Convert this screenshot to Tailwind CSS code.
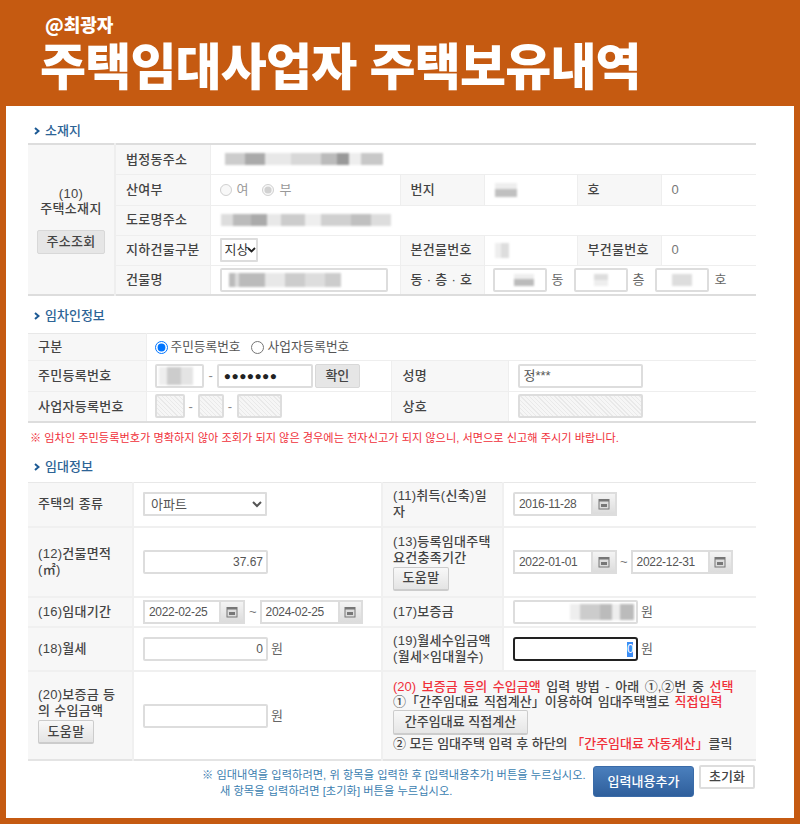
<!DOCTYPE html>
<html lang="ko">
<head>
<meta charset="utf-8">
<script src="https://cdn.jsdelivr.net/npm/@tailwindcss/browser@4"></script>
</head>
<body class="m-0 bg-[#c55a11] font-['Liberation_Sans','Noto_Sans_CJK_KR',sans-serif] text-[13px] text-[#555] overflow-hidden">
<div class="w-[800px] h-[824px] flex flex-col">
  <header class="h-[106px] shrink-0 text-white pl-[40px] font-['Noto_Sans_CJK_KR',sans-serif]">
    <div class="pl-[5px] pt-[14px] h-[34px] text-[18px] leading-[20px] font-black">@최광자</div>
    <h1 class="m-0 text-[50px] leading-[58px] font-black tracking-[-0.8px] whitespace-nowrap">주택임대사업자 주택보유내역</h1>
  </header>
  <main class="mx-[6px] w-[788px] h-[712px] bg-white pl-[22px] pr-[38px] flex flex-col">
    <h2 class="h-[37px] pt-[13px] pl-[6px] m-0 flex items-center gap-[5px] text-[13px] leading-[18px] font-medium text-[#2d6496]">
      <svg class="w-[6px] h-[8px]" viewBox="0 0 6 8"><path d="M1 1l3.5 3L1 7" fill="none" stroke="#1d5a94" stroke-width="2"/></svg>소재지
    </h2>
    <table class="w-[728px] table-fixed border-collapse border-t-2 border-b-2 border-[#ddd]">
      <colgroup><col class="w-[87px]"><col class="w-[95px]"><col class="w-[190px]"><col class="w-[84px]"><col class="w-[93px]"><col class="w-[84px]"><col></colgroup>
      <tbody>
        <tr class="h-[30px]">
          <th rowspan="5" class="bg-[#f7f7f7] border-r-2 border-[#eee] text-[#444] font-medium text-center leading-[15px] align-middle tracking-[0.3px]">
            <div>(10)</div><div>주택소재지</div>
            <button class="mt-[14px] w-[68px] h-[24px] bg-[#e6e6e6] border border-[#d8d8d8] rounded-[2px] text-[#444]">주소조회</button>
          </th>
          <th class="bg-[#f7f7f7] border-b border-r border-[#eee] px-[10px] text-left text-[#444] font-medium tracking-[0.3px] whitespace-nowrap">법정동주소</th>
          <td colspan="5" class="border-b border-[#eee] px-[10px]">
            <div class="w-[162px] h-[12px] blur-[1.2px] bg-[linear-gradient(90deg,#fff_0_4px,#ccc_4px_24px,#aaa_24px_44px,#e8e8e8_44px_70px,#d8d8d8_70px_100px,#bbb_100px_116px,#999_116px_128px,#eee_128px_140px,#c8c8c8_140px_162px)]"></div>
          </td>
        </tr>
        <tr class="h-[31px]">
          <th class="bg-[#f7f7f7] border-b border-r border-[#eee] px-[10px] text-left text-[#444] font-medium tracking-[0.3px] whitespace-nowrap">산여부</th>
          <td class="border-b border-r border-[#eee] px-[9px] text-[#999]">
            <div class="flex items-center gap-[5px]"><input type="radio" disabled class="m-0 w-[12px] h-[12px]"><span>여</span><input type="radio" checked disabled class="m-0 ml-[9px] w-[12px] h-[12px]"><span>부</span></div>
          </td>
          <th class="bg-[#f7f7f7] border-b border-r border-[#eee] px-[10px] text-left text-[#444] font-medium tracking-[0.3px] whitespace-nowrap">번지</th>
          <td class="border-b border-r border-[#eee] px-[10px]">
            <div class="w-[22px] h-[14px] blur-[1.2px] bg-[linear-gradient(180deg,#eee_0_6px,#c0c0c0_6px_14px)]"></div>
          </td>
          <th class="bg-[#f7f7f7] border-b border-r border-[#eee] px-[10px] text-left text-[#444] font-medium tracking-[0.3px] whitespace-nowrap">호</th>
          <td class="border-b border-[#eee] px-[10px] text-[#777]">0</td>
        </tr>
        <tr class="h-[30px]">
          <th class="bg-[#f7f7f7] border-b border-r border-[#eee] px-[10px] text-left text-[#444] font-medium tracking-[0.3px] whitespace-nowrap">도로명주소</th>
          <td colspan="5" class="border-b border-[#eee] px-[10px]">
            <div class="w-[170px] h-[12px] blur-[1.2px] bg-[linear-gradient(90deg,#ddd_0_12px,#bbb_12px_30px,#aaa_30px_46px,#e8e8e8_46px_60px,#ccc_60px_84px,#eee_84px_100px,#d0d0d0_100px_130px,#c0c0c0_130px_150px,#ddd_150px_170px)]"></div>
          </td>
        </tr>
        <tr class="h-[30px]">
          <th class="bg-[#f7f7f7] border-b border-r border-[#eee] px-[10px] text-left text-[#444] font-medium tracking-[0.3px] whitespace-nowrap">지하건물구분</th>
          <td class="border-b border-r border-[#eee] px-[9px]">
            <div class="relative w-[38px] h-[24px]">
              <select class="block appearance-none w-[38px] h-[24px] border-2 border-[#ddd] rounded-[1px] bg-white text-[#333] text-[13px] pl-[3px]"><option>지상</option></select>
              <svg class="absolute right-[2px] top-[9px] w-[9px] h-[6px] pointer-events-none" viewBox="0 0 9 6"><path d="M1 1l3.5 3.5L8 1" fill="none" stroke="#222" stroke-width="1.8"/></svg>
            </div>
          </td>
          <th class="bg-[#f7f7f7] border-b border-r border-[#eee] px-[10px] text-left text-[#444] font-medium tracking-[0.3px] whitespace-nowrap">본건물번호</th>
          <td class="border-b border-r border-[#eee] px-[10px]">
            <div class="w-[14px] h-[15px] blur-[1.2px] bg-[linear-gradient(90deg,#eee_0_6px,#ddd_6px_14px)]"></div>
          </td>
          <th class="bg-[#f7f7f7] border-b border-r border-[#eee] px-[10px] text-left text-[#444] font-medium tracking-[0.3px] whitespace-nowrap">부건물번호</th>
          <td class="border-b border-[#eee] px-[10px] text-[#777]">0</td>
        </tr>
        <tr class="h-[30px]">
          <th class="bg-[#f7f7f7] border-r border-[#eee] px-[10px] text-left text-[#444] font-medium tracking-[0.3px] whitespace-nowrap">건물명</th>
          <td class="border-r border-[#eee] px-[9px]">
            <div class="w-[168px] h-[24px] border-2 border-[#ddd] rounded-[2px] flex items-center pl-[7px]">
              <div class="w-[112px] h-[14px] blur-[1.2px] bg-[linear-gradient(90deg,#bbb_0_6px,#ddd_6px_10px,#bbb_10px_36px,#e8e8e8_36px_56px,#ccc_56px_76px,#ddd_76px_96px,#ccc_96px_112px)]"></div>
            </div>
          </td>
          <th class="bg-[#f7f7f7] border-r border-[#eee] px-[10px] text-left text-[#444] font-medium tracking-[0.3px] whitespace-nowrap">동 · 층 · 호</th>
          <td colspan="3" class="pl-[8px]">
            <div class="flex items-center text-[#666]">
              <div class="w-[54px] h-[24px] border-2 border-[#ddd] rounded-[2px] flex items-center justify-center pl-[8px]"><div class="w-[20px] h-[12px] blur-[1px] bg-[linear-gradient(180deg,#eee_0_5px,#bbb_5px_12px)]"></div></div>
              <span class="ml-[5px]">동</span>
              <div class="ml-[11px] w-[54px] h-[24px] border-2 border-[#ddd] rounded-[2px] flex items-center justify-center"><div class="w-[14px] h-[12px] blur-[1px] bg-[linear-gradient(180deg,#ddd_0_6px,#eee_6px_12px)]"></div></div>
              <span class="ml-[4px]">층</span>
              <div class="ml-[11px] w-[54px] h-[24px] border-2 border-[#ddd] rounded-[2px] flex items-center justify-center"><div class="w-[20px] h-[12px] blur-[1px] bg-[#ddd]"></div></div>
              <span class="ml-[5px]">호</span>
            </div>
          </td>
        </tr>
      </tbody>
    </table>

    <h2 class="h-[37px] pt-[3px] pl-[6px] m-0 flex items-center gap-[5px] text-[13px] leading-[18px] font-medium text-[#2d6496]">
      <svg class="w-[6px] h-[8px]" viewBox="0 0 6 8"><path d="M1 1l3.5 3L1 7" fill="none" stroke="#1d5a94" stroke-width="2"/></svg>임차인정보
    </h2>
    <table class="w-[728px] table-fixed border-collapse border-t border-b-2 border-t-[#e8e8e8] border-b-[#ddd]">
      <colgroup><col class="w-[118px]"><col class="w-[245px]"><col class="w-[117px]"><col></colgroup>
      <tbody>
        <tr class="h-[27px]">
          <th class="bg-[#f7f7f7] border-b border-r border-[#eee] px-[10px] text-left text-[#444] font-medium tracking-[0.3px] leading-[16px]">구분</th>
          <td colspan="3" class="border-b border-[#eee] px-[8px] leading-[16px]">
            <div class="flex items-center text-[#555] text-[12.7px]"><input type="radio" name="k" checked class="m-0 w-[13px] h-[13px]"><span class="ml-[3px]">주민등록번호</span><input type="radio" name="k" class="m-0 ml-[10px] w-[13px] h-[13px]"><span class="ml-[4px]">사업자등록번호</span></div>
          </td>
        </tr>
        <tr class="h-[31px]">
          <th class="bg-[#f7f7f7] border-b border-r border-[#eee] px-[10px] text-left text-[#444] font-medium tracking-[0.3px]">주민등록번호</th>
          <td class="border-b border-r border-[#eee] px-[8px]">
            <div class="flex items-center">
              <div class="w-[49px] h-[24px] border-2 border-[#ddd] rounded-[2px] flex items-center pl-[2px]"><div class="w-[34px] h-[18px] blur-[1.2px] bg-[linear-gradient(90deg,#eee_0_8px,#ccc_8px_22px,#e4e4e4_22px_34px)]"></div></div>
              <span class="ml-[5px] mr-[4px] text-[#888]">-</span>
              <div class="w-[96px] h-[24px] border-2 border-[#ddd] rounded-[2px] flex items-center pl-[5px] text-[#222] text-[12px] tracking-[0.4px]">●●●●●●●</div>
              <button class="ml-[2px] w-[45px] h-[24px] bg-[#e6e6e6] border border-[#d8d8d8] rounded-[2px] text-[#444] font-medium">확인</button>
            </div>
          </td>
          <th class="bg-[#f7f7f7] border-b border-r border-[#eee] px-[11px] text-left text-[#444] font-medium tracking-[0.3px]">성명</th>
          <td class="border-b border-[#eee] px-[9px]">
            <div class="w-[125px] h-[24px] border-2 border-[#ddd] rounded-[2px] flex items-center pl-[4px] text-[#555]">정***</div>
          </td>
        </tr>
        <tr class="h-[30px]">
          <th class="bg-[#f7f7f7] border-r border-[#eee] px-[10px] text-left text-[#444] font-medium tracking-[0.3px]">사업자등록번호</th>
          <td class="border-r border-[#eee] px-[8px]">
            <div class="flex items-center">
              <div class="w-[30px] h-[24px] border-2 border-[#ddd] rounded-[2px] bg-[repeating-linear-gradient(45deg,#f6f6f6_0_2px,#e9e9e9_2px_3px)]"></div>
              <span class="ml-[4px] mr-[5px] text-[#888]">-</span>
              <div class="w-[26px] h-[24px] border-2 border-[#ddd] rounded-[2px] bg-[repeating-linear-gradient(45deg,#f6f6f6_0_2px,#e9e9e9_2px_3px)]"></div>
              <span class="ml-[4px] mr-[5px] text-[#888]">-</span>
              <div class="w-[45px] h-[24px] border-2 border-[#ddd] rounded-[2px] bg-[repeating-linear-gradient(45deg,#f6f6f6_0_2px,#e9e9e9_2px_3px)]"></div>
            </div>
          </td>
          <th class="bg-[#f7f7f7] border-r border-[#eee] px-[11px] text-left text-[#444] font-medium tracking-[0.3px]">상호</th>
          <td class="px-[9px]">
            <div class="w-[125px] h-[24px] border-2 border-[#ddd] rounded-[2px] bg-[repeating-linear-gradient(45deg,#f6f6f6_0_2px,#e9e9e9_2px_3px)]"></div>
          </td>
        </tr>
      </tbody>
    </table>
    <p class="m-0 mt-[6px] h-[18px] leading-[18px] pl-[2px] text-[11.2px] text-[#f0303a] whitespace-nowrap">※ 임차인 주민등록번호가 명확하지 않아 조회가 되지 않은 경우에는 전자신고가 되지 않으니, 서면으로 신고해 주시기 바랍니다.</p>
    <h2 class="h-[35px] pt-[5px] pl-[6px] m-0 flex items-center gap-[5px] text-[13px] leading-[18px] font-medium text-[#2d6496]">
      <svg class="w-[6px] h-[8px]" viewBox="0 0 6 8"><path d="M1 1l3.5 3L1 7" fill="none" stroke="#1d5a94" stroke-width="2"/></svg>임대정보
    </h2>

    <table class="w-[728px] table-fixed border-collapse border-t border-b-2 border-t-[#e8e8e8] border-b-[#e4e4e4] leading-[16px]">
      <colgroup><col class="w-[105px]"><col class="w-[249px]"><col class="w-[121px]"><col></colgroup>
      <tbody>
        <tr class="h-[45px]">
          <th class="bg-[#f7f7f7] border-b-2 border-r-2 border-[#f0f0f0] pl-[10px] pr-[4px] text-left text-[#444] font-medium tracking-[0.3px]">주택의 종류</th>
          <td class="border-b-2 border-r-2 border-[#f0f0f0] px-[9px]">
            <select class="block w-[124px] h-[24px] border-2 border-[#ddd] rounded-[1px] bg-white text-[#555] text-[13px] pl-[2px]"><option>아파트</option></select>
          </td>
          <th class="bg-[#f7f7f7] border-b-2 border-r-2 border-[#f0f0f0] pl-[10px] pr-[4px] text-left text-[#444] font-medium tracking-[0.3px]">(11)취득(신축)일<br>자</th>
          <td class="border-b-2 border-[#f0f0f0] px-[9px]">
            <div class="flex">
              <div class="w-[80px] h-[24px] border-2 border-[#ddd] rounded-l-[2px] flex items-center pl-[4px] text-[12px] tracking-[-0.3px] text-[#555] bg-white">2016-11-28</div>
              <div class="w-[24px] h-[24px] border-y-2 border-r-2 border-[#ddd] bg-[linear-gradient(#f4f4f4,#dcdcdc)] flex items-center justify-center"><svg class="w-[12px] h-[12px]" viewBox="0 0 12 12"><rect x="1" y="1.5" width="10" height="9.5" fill="#ddd" stroke="#777"/><rect x="1" y="1.5" width="10" height="2" fill="#777"/><rect x="3" y="6" width="6" height="3" fill="#777"/></svg></div>
            </div>
          </td>
        </tr>
        <tr class="h-[70px]">
          <th class="bg-[#f7f7f7] border-b-2 border-r-2 border-[#f0f0f0] pl-[10px] pr-[4px] text-left text-[#444] font-medium tracking-[0.3px]">(12)건물면적<br>(㎡)</th>
          <td class="border-b-2 border-r-2 border-[#f0f0f0] px-[9px]">
            <div class="w-[125px] h-[24px] border-2 border-[#ddd] rounded-[2px] flex items-center justify-end pr-[3px] text-[12px] text-[#555]">37.67</div>
          </td>
          <th class="bg-[#f7f7f7] border-b-2 border-r-2 border-[#f0f0f0] pl-[10px] pr-[4px] text-left text-[#444] font-medium tracking-[0.3px]">(13)등록임대주택<br>요건충족기간
            <button class="block w-[56px] h-[24px] mt-[1px] bg-[linear-gradient(#f8f8f8,#e4e4e4)] border border-[#ccc] border-b-2 rounded-[2px] text-[#444] font-medium">도움말</button>
          </th>
          <td class="border-b-2 border-[#f0f0f0] px-[9px]">
            <div class="flex items-center">
              <div class="w-[80px] h-[24px] border-2 border-[#ddd] flex items-center pl-[4px] text-[12px] tracking-[-0.3px] text-[#555]">2022-01-01</div>
              <div class="w-[24px] h-[24px] border-y-2 border-r-2 border-[#ddd] bg-[linear-gradient(#f4f4f4,#dcdcdc)] flex items-center justify-center"><svg class="w-[12px] h-[12px]" viewBox="0 0 12 12"><rect x="1" y="1.5" width="10" height="9.5" fill="#ddd" stroke="#777"/><rect x="1" y="1.5" width="10" height="2" fill="#777"/><rect x="3" y="6" width="6" height="3" fill="#777"/></svg></div>
              <span class="mx-[3px] text-[#777]">~</span>
              <div class="w-[79px] h-[24px] border-2 border-[#ddd] flex items-center pl-[4px] text-[12px] tracking-[-0.3px] text-[#555]">2022-12-31</div>
              <div class="w-[23px] h-[24px] border-y-2 border-r-2 border-[#ddd] bg-[linear-gradient(#f4f4f4,#dcdcdc)] flex items-center justify-center"><svg class="w-[12px] h-[12px]" viewBox="0 0 12 12"><rect x="1" y="1.5" width="10" height="9.5" fill="#ddd" stroke="#777"/><rect x="1" y="1.5" width="10" height="2" fill="#777"/><rect x="3" y="6" width="6" height="3" fill="#777"/></svg></div>
            </div>
          </td>
        </tr>
        <tr class="h-[30px]">
          <th class="bg-[#f7f7f7] border-b-2 border-r-2 border-[#f0f0f0] pl-[10px] pr-[4px] text-left text-[#444] font-medium tracking-[0.3px]">(16)임대기간</th>
          <td class="border-b-2 border-r-2 border-[#f0f0f0] px-[9px]">
            <div class="flex items-center">
              <div class="w-[78px] h-[24px] border-2 border-[#ddd] flex items-center pl-[4px] text-[12px] tracking-[-0.3px] text-[#555]">2022-02-25</div>
              <div class="w-[24px] h-[24px] border-y-2 border-r-2 border-[#ddd] bg-[linear-gradient(#f4f4f4,#dcdcdc)] flex items-center justify-center"><svg class="w-[12px] h-[12px]" viewBox="0 0 12 12"><rect x="1" y="1.5" width="10" height="9.5" fill="#ddd" stroke="#777"/><rect x="1" y="1.5" width="10" height="2" fill="#777"/><rect x="3" y="6" width="6" height="3" fill="#777"/></svg></div>
              <span class="ml-[4px] mr-[3px] text-[#777]">~</span>
              <div class="w-[80px] h-[24px] border-2 border-[#ddd] flex items-center pl-[4px] text-[12px] tracking-[-0.3px] text-[#555]">2024-02-25</div>
              <div class="w-[23px] h-[24px] border-y-2 border-r-2 border-[#ddd] bg-[linear-gradient(#f4f4f4,#dcdcdc)] flex items-center justify-center"><svg class="w-[12px] h-[12px]" viewBox="0 0 12 12"><rect x="1" y="1.5" width="10" height="9.5" fill="#ddd" stroke="#777"/><rect x="1" y="1.5" width="10" height="2" fill="#777"/><rect x="3" y="6" width="6" height="3" fill="#777"/></svg></div>
            </div>
          </td>
          <th class="bg-[#f7f7f7] border-b-2 border-r-2 border-[#f0f0f0] pl-[10px] pr-[4px] text-left text-[#444] font-medium tracking-[0.3px]">(17)보증금</th>
          <td class="border-b-2 border-[#f0f0f0] px-[9px]">
            <div class="flex items-center">
              <div class="w-[125px] h-[24px] border-2 border-[#ddd] rounded-[2px] flex items-center justify-end pr-[2px]"><div class="w-[64px] h-[16px] blur-[1.2px] bg-[linear-gradient(90deg,#eee_0_10px,#ccc_10px_30px,#bbb_30px_42px,#eee_42px_50px,#bbb_50px_64px)]"></div></div>
              <span class="ml-[3px] text-[#666]">원</span>
            </div>
          </td>
        </tr>
        <tr class="h-[44px]">
          <th class="bg-[#f7f7f7] border-b-2 border-r-2 border-[#f0f0f0] pl-[10px] pr-[4px] text-left text-[#444] font-medium tracking-[0.3px]">(18)월세</th>
          <td class="border-b-2 border-r-2 border-[#f0f0f0] px-[9px]">
            <div class="flex items-center">
              <div class="w-[125px] h-[24px] border-2 border-[#ddd] rounded-[2px] flex items-center justify-end pr-[3px] text-[12px] text-[#555]">0</div>
              <span class="ml-[3px] text-[#666]">원</span>
            </div>
          </td>
          <th class="bg-[#f7f7f7] border-b-2 border-r-2 border-[#f0f0f0] pl-[10px] pr-[4px] text-left text-[#444] font-medium tracking-[0.3px]">(19)월세수입금액<br>(월세×임대월수)</th>
          <td class="border-b-2 border-[#f0f0f0] px-[9px]">
            <div class="flex items-center">
              <div class="w-[125px] h-[24px] border-2 border-[#222] rounded-[3px] flex items-center justify-end pr-[3px] text-[12px] text-[#333]"><span class="bg-[#3b8cf5] text-white px-[0px] leading-[15px] w-[6px] text-center">0</span></div>
              <span class="ml-[3px] text-[#666]">원</span>
            </div>
          </td>
        </tr>
        <tr class="h-[89px]">
          <th class="bg-[#f7f7f7] border-r-2 border-[#f0f0f0] pl-[10px] pr-[4px] text-left text-[#444] font-medium tracking-[0.3px]">(20)보증금 등<br>의 수입금액
            <button class="block w-[56px] h-[24px] mt-[1px] bg-[linear-gradient(#f8f8f8,#e4e4e4)] border border-[#ccc] border-b-2 rounded-[2px] text-[#444] font-medium">도움말</button>
          </th>
          <td class="border-r-2 border-[#f0f0f0] px-[9px]">
            <div class="flex items-center">
              <div class="w-[125px] h-[24px] border-2 border-[#ddd] rounded-[2px]"></div>
              <span class="ml-[3px] text-[#666]">원</span>
            </div>
          </td>
          <td colspan="2" class="bg-[#f7f7f7] pl-[10px] text-[#444] font-medium whitespace-nowrap">
            <div class="leading-[15px] [word-spacing:2px]"><span class="text-[#f0303a]">(20) 보증금 등의 수입금액</span> 입력 방법 - 아래 ①,②번 중 <span class="text-[#f0303a]">선택</span></div>
            <div class="leading-[15px] [word-spacing:1.5px]">①「간주임대료 직접계산」이용하여 임대주택별로 <span class="text-[#f0303a]">직접입력</span></div>
            <button class="block w-[135px] h-[25px] mt-[1px] mb-[1px] bg-[linear-gradient(#f8f8f8,#e6e6e6)] border border-[#ccc] border-b-2 rounded-[2px] text-[#444] font-medium">간주임대료 직접계산</button>
            <div class="leading-[16px]">② 모든 임대주택 입력 후 하단의 <span class="text-[#f0303a]">「간주임대료 자동계산」</span>클릭</div>
          </td>
        </tr>
      </tbody>
    </table>

    <div class="flex items-start mt-[4px] w-[728px]">
      <div class="ml-[174px] w-[391px] text-[11.2px] tracking-[0.06px] leading-[16px] text-[#3b7eb0] whitespace-nowrap mt-[2px]">
        <div>※ 임대내역을 입력하려면, 위 항목을 입력한 후 [입력내용추가] 버튼을 누르십시오.</div>
        <div class="pl-[18px]">새 항목을 입력하려면 [초기화] 버튼을 누르십시오.</div>
      </div>
      <button class="w-[101px] h-[31px] mt-[1px] bg-[linear-gradient(#4a7fbd,#2f5f9c)] border border-[#3a6ba8] rounded-[3px] text-white font-medium">입력내용추가</button>
      <button class="ml-[5px] w-[56px] h-[24px] bg-white border-2 border-[#ddd] rounded-[2px] text-[#444] font-medium">초기화</button>
    </div>
  </main>
</div>
</body>
</html>
